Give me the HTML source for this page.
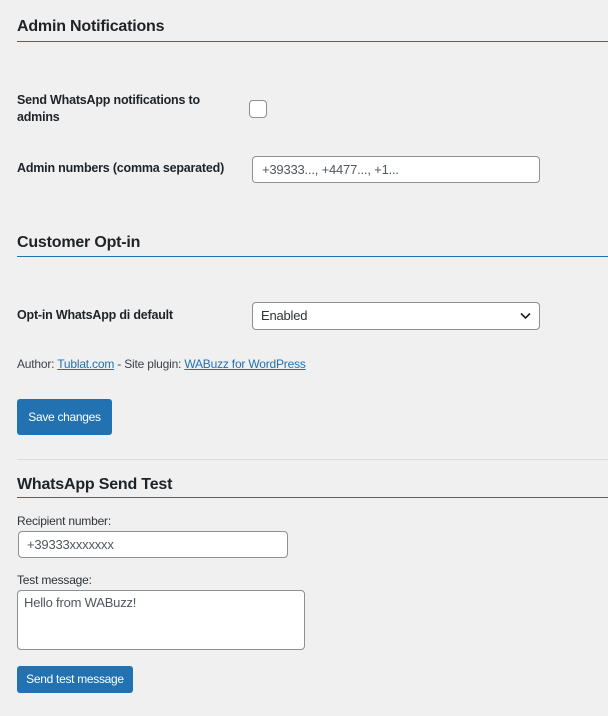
<!DOCTYPE html>
<html><head><style>
body{margin:0;width:608px;height:716px;background:#f0f0f1;font-family:"Liberation Sans",sans-serif;color:#1d2327;position:relative;overflow:hidden}
.a{position:absolute;white-space:nowrap}
h2{position:absolute;margin:0;font-size:16px;font-weight:bold;left:17px;letter-spacing:-0.2px}
.line{position:absolute;left:17px;right:0;height:1px;background:#2271b1}
.lab{font-size:12.5px;font-weight:bold;left:17px;letter-spacing:-0.2px}
.in{position:absolute;background:#fff;border:1px solid #8c8f94;border-radius:4px;box-sizing:border-box;font-size:13px;color:#50575e;padding-left:9px;letter-spacing:-0.2px}
.btn{position:absolute;background:#2271b1;color:#fff;border-radius:3px;font-size:12px;text-align:center;letter-spacing:-0.3px}
a{color:#2271b1}
</style></head><body>
<h2 style="top:18px">Admin Notifications</h2>
<div class="line" style="top:41px"></div>
<div class="a lab" style="top:92px;line-height:17px">Send WhatsApp notifications to<br>admins</div>
<div class="a" style="left:249px;top:100px;width:16px;height:16px;border:1px solid #8c8f94;border-radius:4px;background:#fff"></div>
<div class="a lab" style="top:161px">Admin numbers (comma separated)</div>
<div class="in" style="left:252px;top:156px;width:288px;height:27px;line-height:25px">+39333..., +4477..., +1...</div>
<h2 style="top:234px">Customer Opt-in</h2>
<div class="line" style="top:256px"></div>
<div class="a lab" style="top:308px">Opt-in WhatsApp di default</div>
<div class="in" style="left:252px;top:302px;width:288px;height:28px;line-height:26px;color:#2c3338;padding-left:8px">Enabled
<svg style="position:absolute;right:8px;top:9px" width="11" height="8" viewBox="0 0 11 8"><path d="M1 1.5l4.5 4.5 4.5-4.5" fill="none" stroke="#1d2327" stroke-width="1.6"/></svg></div>
<div class="a" style="left:17px;top:357px;font-size:12px;color:#3c434a;letter-spacing:-0.2px">Author: <a href="#">Tublat.com</a> - Site plugin: <a href="#">WABuzz for WordPress</a></div>
<div class="btn" style="left:17px;top:399px;width:95px;height:36px;line-height:36px">Save changes</div>
<div class="a" style="left:17px;right:0;top:459px;height:1px;background:#dcdcde"></div>
<h2 style="top:476px">WhatsApp Send Test</h2>
<div class="line" style="top:497px"></div>
<div class="a" style="left:17px;top:514px;font-size:12px;color:#2c3338;letter-spacing:-0.2px">Recipient number:</div>
<div class="in" style="left:18px;top:531px;width:270px;height:27px;line-height:25px;padding-left:8px">+39333xxxxxxx</div>
<div class="a" style="left:17px;top:573px;font-size:12px;color:#2c3338;letter-spacing:-0.2px">Test message:</div>
<div class="in" style="left:17px;top:590px;width:288px;height:60px;padding:4px 0 0 6px;line-height:16px">Hello from WABuzz!</div>
<div class="btn" style="left:17px;top:666px;width:116px;height:27px;line-height:27px">Send test message</div>
</body></html>
